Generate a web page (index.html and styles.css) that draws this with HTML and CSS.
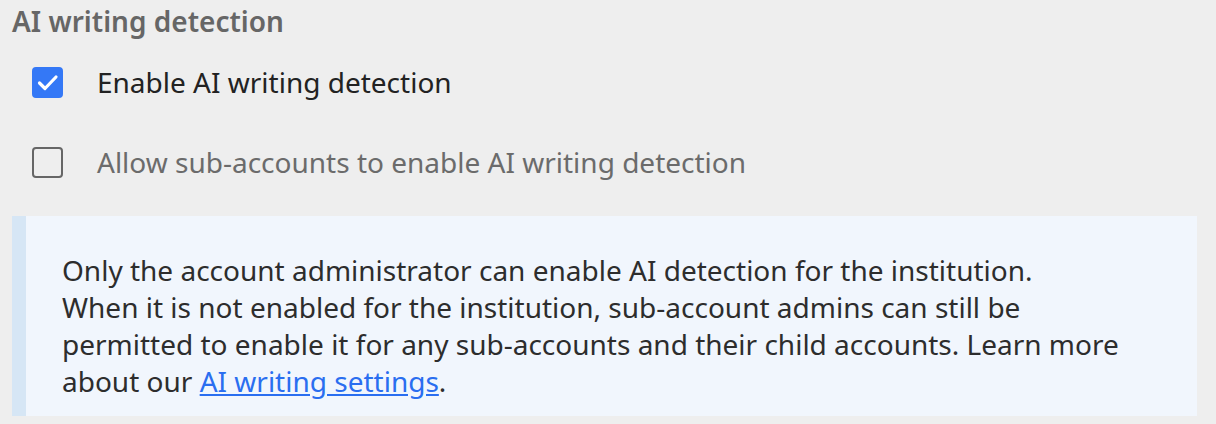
FILE: index.html
```html
<!DOCTYPE html>
<html>
<head>
    <title>AI writing detection</title>
    <link rel="stylesheet" href="styles.css">
</head>
<body>
    <div class="section">
        <h2 class="section-title">AI writing detection</h2>
        <label class="check-row">
            <span class="check-box checked">
                <svg viewBox="0 0 31 31" width="31" height="31"><path d="M7.5 16l5.5 5.5L24 10" fill="none" stroke="#fff" stroke-width="3.2" stroke-linecap="round" stroke-linejoin="round"/></svg>
            </span>
            <span class="check-label">Enable AI writing detection</span>
        </label>
        <label class="check-row">
            <span class="check-box"></span>
            <span class="check-label muted">Allow sub-accounts to enable AI writing detection</span>
        </label>
        <div class="info-box">
            <p>Only the account administrator can enable AI detection for the institution.<br>
            When it is not enabled for the institution, sub-account admins can still be
            permitted to enable it for any sub-accounts and their child accounts. Learn more
            about our <a href="#">AI writing settings</a>.</p>
        </div>
    </div>
</body>
</html>
```

FILE: styles.css
```css
body {
    font-family: 'Noto Sans', 'Open Sans', sans-serif;
    margin: 0;
    padding: 0 12px;
    background-color: #eeeeee;
}
.section {
    display: flex;
    flex-direction: column;
}
.section-title {
    margin: 0;
    font-size: 28px;
    font-weight: 600;
    line-height: 42px;
    color: #666666;
}
.check-row {
    display: flex;
    align-items: center;
    height: 80px;
    padding-left: 20px;
}
.check-box {
    width: 31px;
    height: 31px;
    box-sizing: border-box;
    border: 2.5px solid #666666;
    border-radius: 4px;
    display: flex;
    align-items: center;
    justify-content: center;
    flex-shrink: 0;
}
.check-box.checked {
    background: #3478f6;
    border-color: #3478f6;
}
.check-box svg {
    flex-shrink: 0;
}
.check-label {
    margin-left: 34px;
    font-size: 28px;
    color: #222222;
}
.check-label.muted {
    color: #6b6b6b;
}
.info-box {
    margin-top: 14px;
    margin-right: 7px;
    background: #f1f6fd;
    border-left: 14px solid #d6e6f5;
    padding: 36px 60px 16px 36px;
}
.info-box p {
    margin: 0;
    font-size: 28px;
    line-height: 37px;
    color: #2d2d2d;
}
.info-box a {
    color: #2a6ef0;
}
```
